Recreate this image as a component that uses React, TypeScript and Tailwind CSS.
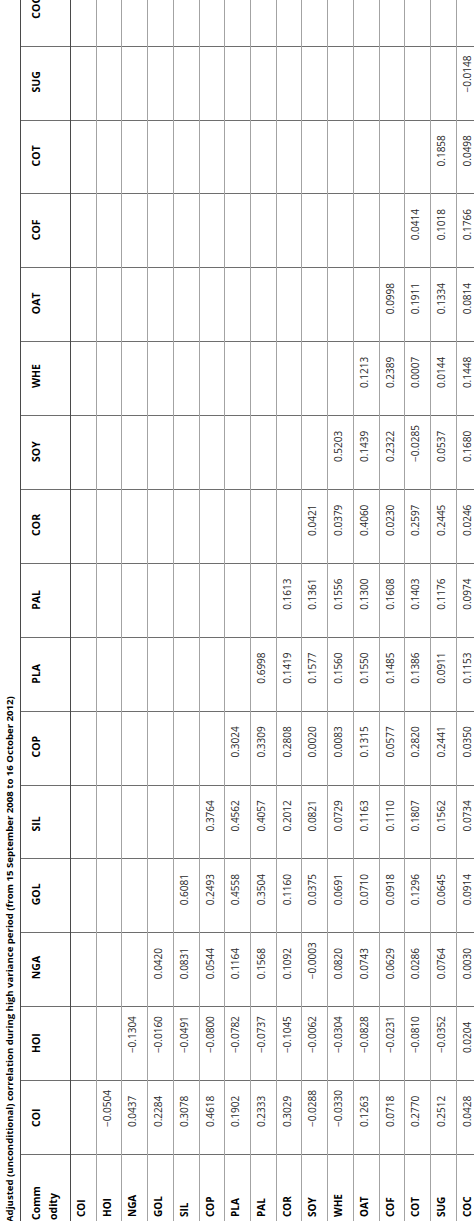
import React from "react";

const cols = ["COI", "HOI", "NGA", "GOL", "SIL", "COP", "PLA", "PAL", "COR", "SOY", "WHE", "OAT", "COF", "COT", "SUG", "COC"];

const data: string[][] = [
  [],
  ["−0.0504"],
  ["0.0437", "−0.1304"],
  ["0.2284", "−0.0160", "0.0420"],
  ["0.3078", "−0.0491", "0.0831", "0.6081"],
  ["0.4618", "−0.0800", "0.0544", "0.2493", "0.3764"],
  ["0.1902", "−0.0782", "0.1164", "0.4558", "0.4562", "0.3024"],
  ["0.2333", "−0.0737", "0.1568", "0.3504", "0.4057", "0.3309", "0.6998"],
  ["0.3029", "−0.1045", "0.1092", "0.1160", "0.2012", "0.2808", "0.1419", "0.1613"],
  ["−0.0288", "−0.0062", "−0.0003", "0.0375", "0.0821", "0.0020", "0.1577", "0.1361", "0.0421"],
  ["−0.0330", "−0.0304", "0.0820", "0.0691", "0.0729", "0.0083", "0.1560", "0.1556", "0.0379", "0.5203"],
  ["0.1263", "−0.0828", "0.0743", "0.0710", "0.1163", "0.1315", "0.1550", "0.1300", "0.4060", "0.1439", "0.1213"],
  ["0.0718", "−0.0231", "0.0629", "0.0918", "0.1110", "0.0577", "0.1485", "0.1608", "0.0230", "0.2322", "0.2389", "0.0998"],
  ["0.2770", "−0.0810", "0.0286", "0.1296", "0.1807", "0.2820", "0.1386", "0.1403", "0.2597", "−0.0285", "0.0007", "0.1911", "0.0414"],
  ["0.2512", "−0.0352", "0.0764", "0.0645", "0.1562", "0.2441", "0.0911", "0.1176", "0.2445", "0.0537", "0.0144", "0.1334", "0.1018", "0.1858"],
  ["0.0428", "0.0204", "0.0030", "0.0914", "0.0734", "0.0350", "0.1153", "0.0974", "0.0246", "0.1680", "0.1448", "0.0814", "0.1766", "0.0498", "−0.0148"],
];

export default function App() {
  return (
    <div className="w-[474px] h-[1221px] overflow-hidden bg-white">
      <div
        className="w-[1221px] h-[474px] origin-top-left [transform:translateY(1221px)_rotate(-90deg)] text-[#111]"
        style={{ fontFamily: '"Open Sans", "Noto Sans", sans-serif' }}
      >
        <div className="h-[20px] -ml-[1px] pt-[3px] text-[9.6px] leading-[14px] font-bold whitespace-nowrap text-black">
          Adjusted (unconditional) correlation during high variance period (from 15 September 2008 to 16 October 2012)
        </div>
        <div className="w-[1260px]">
          <div className="flex h-[51px] border-t border-b border-[#4a4a4a]">
            <div className="w-[66px] shrink-0 pl-[1px] pt-[7px] text-[10.5px] leading-[17px] font-bold text-black">
              Comm
              <br />
              odity
            </div>
            {cols.map((c) => (
              <div
                key={c}
                className="w-[73.9px] shrink-0 border-l border-[#6e6e6e] pl-[27px] pt-[7px] text-[10.5px] leading-[17px] font-bold text-black"
              >
                {c}
              </div>
            ))}
          </div>
          {cols.map((r, i) => (
            <div key={r} className="flex h-[25.73px] border-b border-[#a3a3a3]">
              <div className="w-[66px] shrink-0 pl-[4px] pt-[5px] text-[10px] leading-[10px] font-bold text-black">
                {r}
              </div>
              {cols.map((c, j) => (
                <div
                  key={c}
                  className="w-[73.9px] shrink-0 border-l border-[#6e6e6e] pl-[27px] pt-[5px] text-[10px] leading-[10px] text-[#2a2a2a] whitespace-nowrap"
                >
                  {data[i][j] ?? ""}
                </div>
              ))}
            </div>
          ))}
        </div>
      </div>
    </div>
  );
}
